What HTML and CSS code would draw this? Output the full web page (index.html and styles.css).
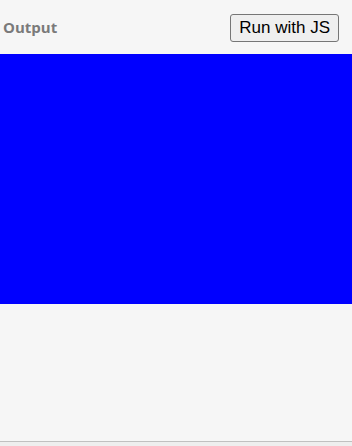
FILE: index.html
```html
<!DOCTYPE html>
<html>
<head>
<meta charset="utf-8">
<link rel="stylesheet" href="styles.css">
</head>
<body>
<div class="page">
  <header class="bar">
    <span class="title">Output</span>
    <button class="run">Run with JS</button>
  </header>
  <div class="output"></div>
  <div class="spacer"></div>
  <div class="footer"></div>
</div>
</body>
</html>
```
FILE: styles.css
```css
html, body {
  margin: 0;
  padding: 0;
  background: #f6f6f6;
}
.page {
  height: 446px;
  display: flex;
  flex-direction: column;
}
.bar {
  height: 54px;
  display: flex;
  align-items: center;
  justify-content: space-between;
  padding: 0 13px 0 3px;
  box-sizing: border-box;
}
.title {
  font-family: "Open Sans", "DejaVu Sans", sans-serif;
  font-weight: bold;
  font-size: 15px;
  color: #7a7a7a;
}
.run {
  font-family: "Liberation Sans", Arial, sans-serif;
  font-size: 17px;
  color: #000;
  background: #efefef;
  border: 1px solid #767676;
  border-radius: 3px;
  height: 28px;
  padding: 0 8px;
  margin-top: 1px;
}
.output {
  height: 250px;
  background: #0000ff;
}
.spacer {
  flex: 1;
}
.footer {
  height: 4px;
  border-top: 1px solid #c0c0c0;
  background: #eeeeee;
}
```
